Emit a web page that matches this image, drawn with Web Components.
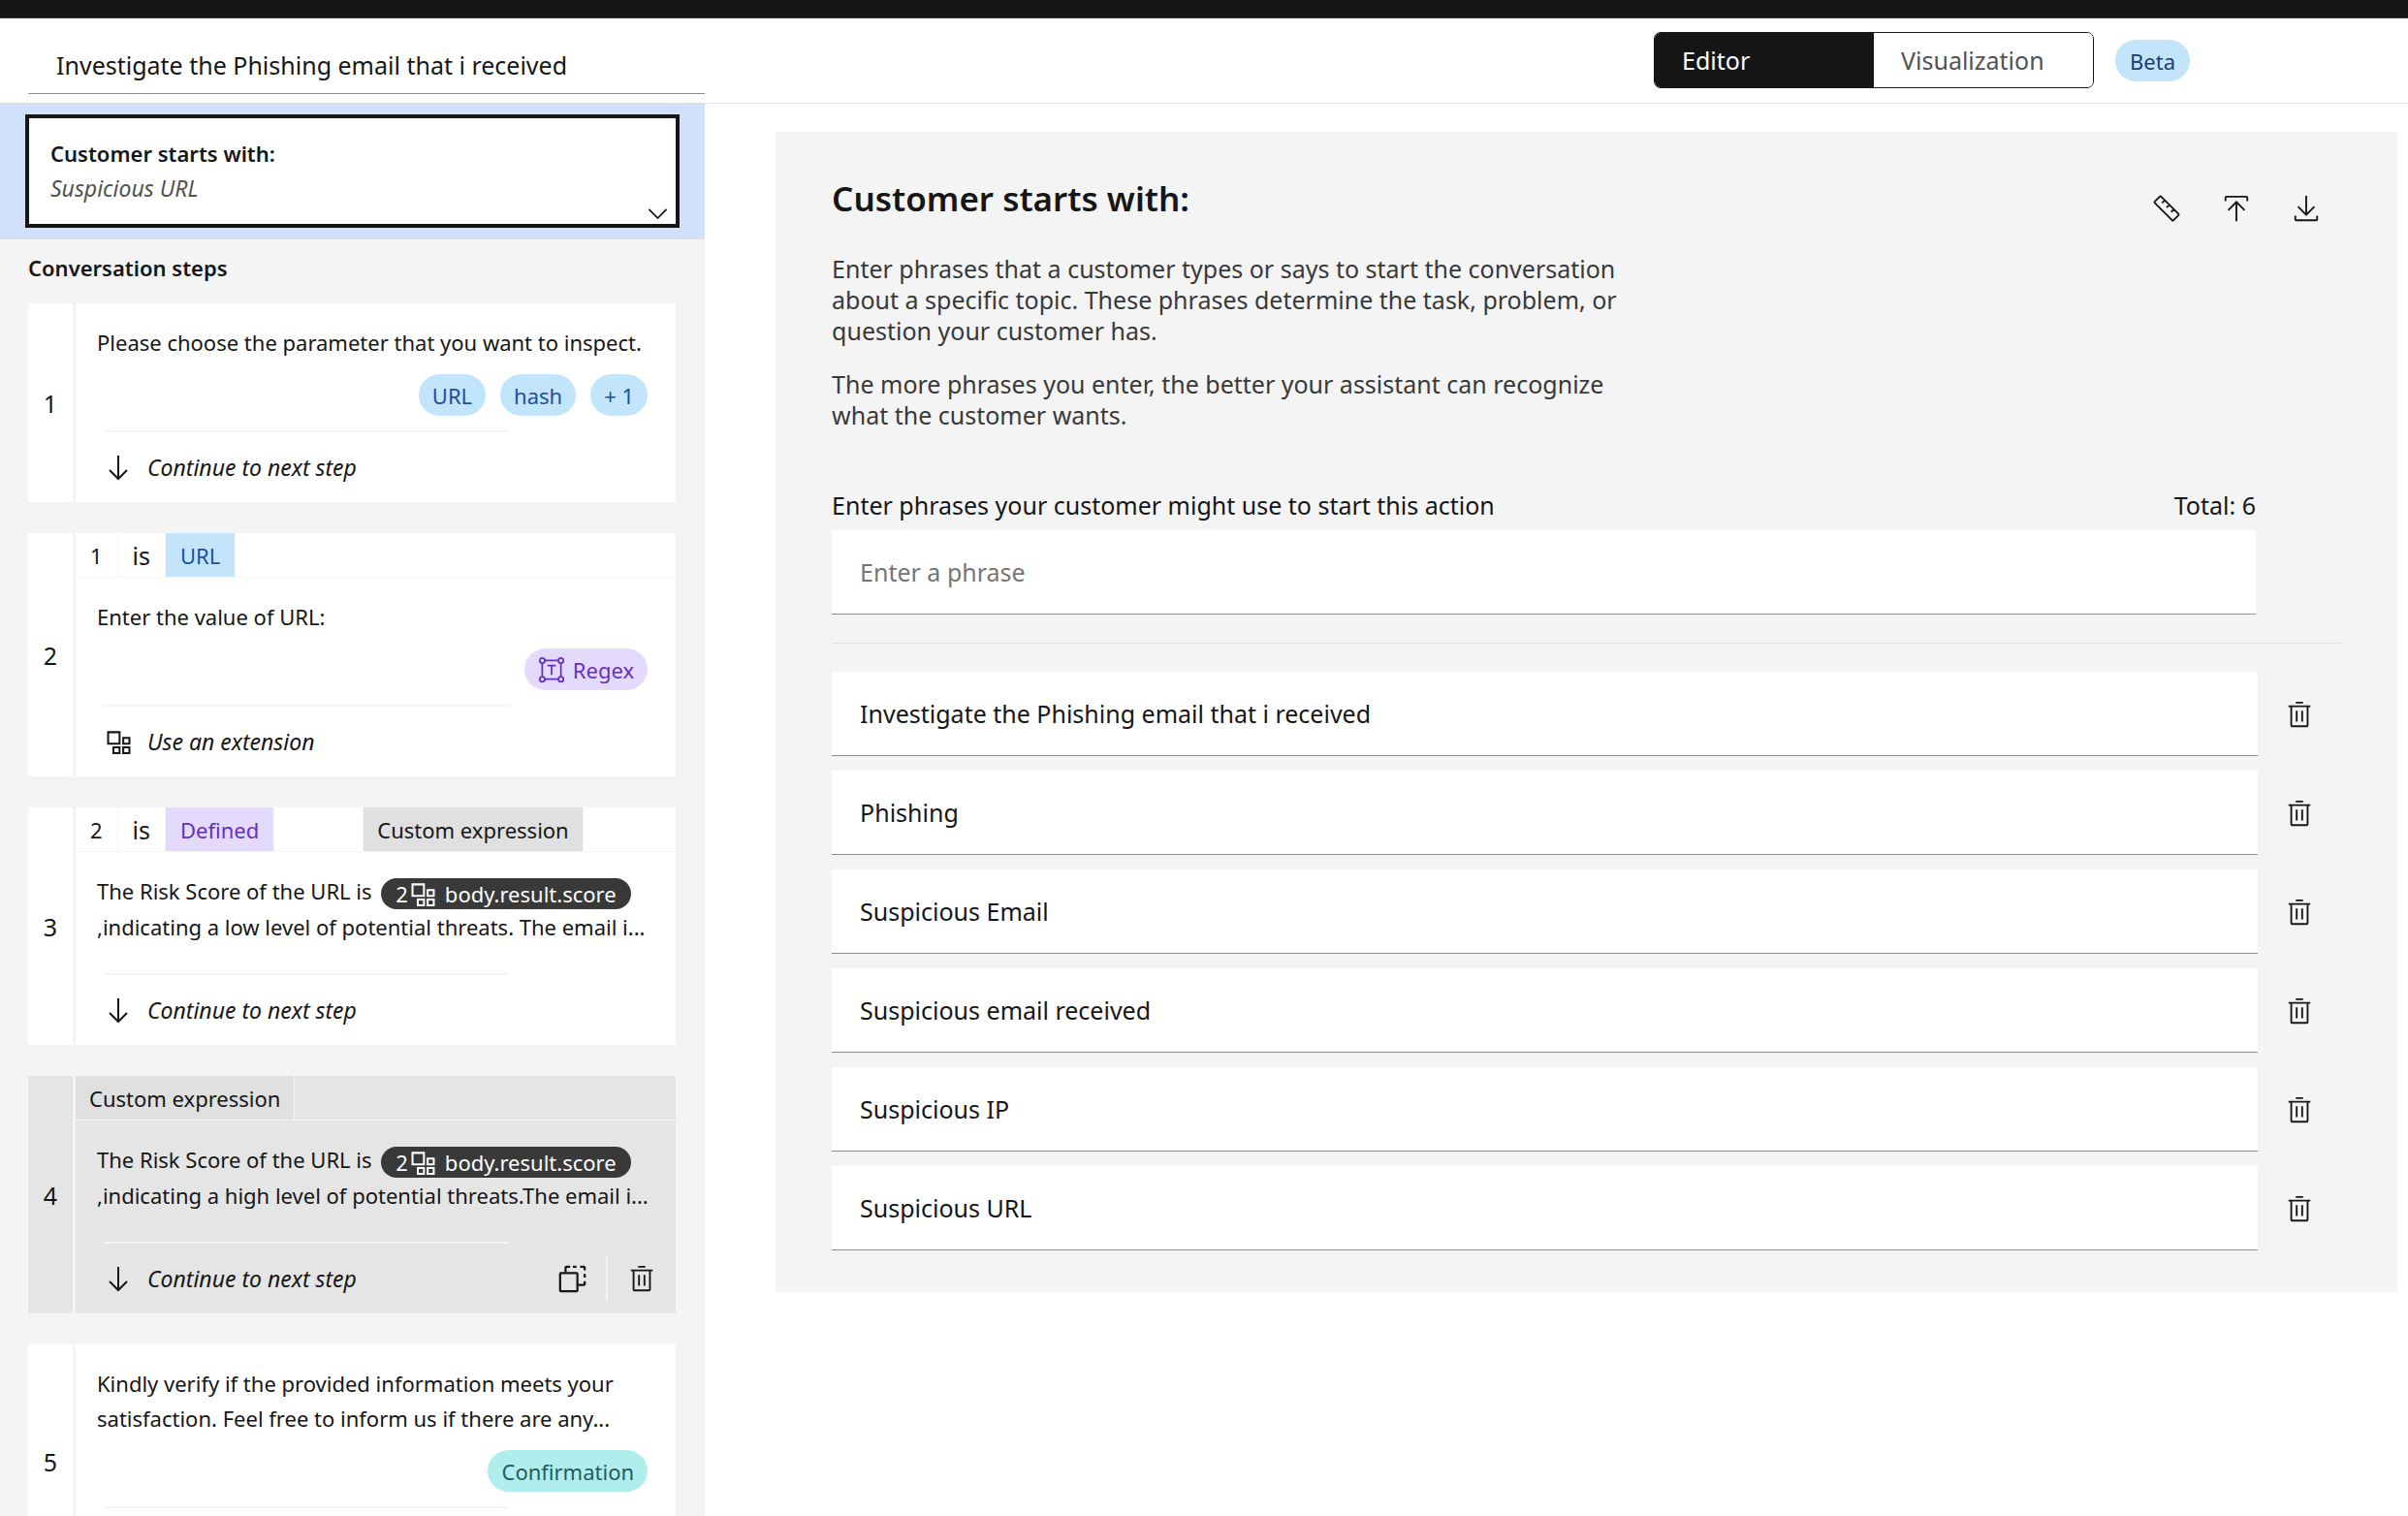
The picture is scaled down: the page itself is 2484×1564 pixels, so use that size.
<!DOCTYPE html>
<html lang="en">
<head>
<meta charset="utf-8">
<title>Investigate the Phishing email that i received</title>
<style>
    body {
        margin: 0;
        height: 100vh;
        overflow: hidden;
        background: #fff;
        color: #161616;
        font-family: "Noto Sans", "Open Sans", sans-serif;
        font-size: 22px;
        line-height: 36px;
    }
</style>
</head>
<body>
<action-editor>
    <editor-header slot="header" name="Investigate the Phishing email that i received"></editor-header>

    <start-card slot="sidebar" heading="Customer starts with:">Suspicious URL</start-card>
    <step-list slot="sidebar" heading="Conversation steps">
        <step-card number="1" next="Continue to next step">
            Please choose the parameter that you want to inspect.
            <tag-pill slot="tags">URL</tag-pill>
            <tag-pill slot="tags">hash</tag-pill>
            <tag-pill slot="tags">+ 1</tag-pill>
        </step-card>
        <step-card number="2" next="Use an extension" next-icon="extension" conditional>
            <step-condition slot="conditions">1</step-condition>
            <step-condition slot="conditions" kind="operator">is</step-condition>
            <step-condition slot="conditions" kind="option">URL</step-condition>
            Enter the value of URL:
            <tag-pill slot="tags" kind="purple"><ui-icon name="regex"></ui-icon>Regex</tag-pill>
        </step-card>
        <step-card number="3" next="Continue to next step" conditional>
            <step-condition slot="conditions">2</step-condition>
            <step-condition slot="conditions" kind="operator">is</step-condition>
            <step-condition slot="conditions" kind="defined">Defined</step-condition>
            <step-condition slot="conditions" kind="blank"></step-condition>
            <step-condition slot="conditions" kind="custom">Custom expression</step-condition>
            The Risk Score of the URL is <variable-chip step="2">body.result.score</variable-chip><br>,indicating a low level of potential threats. The email i...
        </step-card>
        <step-card number="4" next="Continue to next step" conditional hovered>
            <step-condition slot="conditions" kind="custom">Custom expression</step-condition>
            The Risk Score of the URL is <variable-chip step="2">body.result.score</variable-chip><br>,indicating a high level of potential threats.The email i...
        </step-card>
        <step-card number="5">
            Kindly verify if the provided information meets your<br>satisfaction. Feel free to inform us if there are any...
            <tag-pill slot="tags" kind="teal">Confirmation</tag-pill>
        </step-card>
    </step-list>

    <phrase-panel heading="Customer starts with:">
        <p>Enter phrases that a customer types or says to start the conversation<br>about a specific topic. These phrases determine the task, problem, or<br>question your customer has.</p>
        <p>The more phrases you enter, the better your assistant can recognize<br>what the customer wants.</p>
        <phrase-row slot="phrases" value="Investigate the Phishing email that i received"></phrase-row>
        <phrase-row slot="phrases" value="Phishing"></phrase-row>
        <phrase-row slot="phrases" value="Suspicious Email"></phrase-row>
        <phrase-row slot="phrases" value="Suspicious email received"></phrase-row>
        <phrase-row slot="phrases" value="Suspicious IP"></phrase-row>
        <phrase-row slot="phrases" value="Suspicious URL"></phrase-row>
    </phrase-panel>
</action-editor>

<script>
// Icons, all drawn on a 32 unit grid with currentColor
const ICONS = {
    down: '<path d="M16 4V28M7 19l9 9 9-9"/>',
    chevron: '<path d="M6 11l10 10 10-10"/>',
    extension: '<path d="M3 4h14v14H3zM21.500 11h7.500v7h-7.500zM9.500 22.500h7.500v7h-7.500zM21.500 22.500h7.500v7h-7.500z" stroke-width="2.400"/>',
    regex: '<circle cx="5" cy="5" r="3"/><circle cx="27" cy="5" r="3"/><circle cx="5" cy="27" r="3"/><circle cx="27" cy="27" r="3"/><path d="M8 5h16M8 27h16M5 8v16M27 8v16M11 11h10M16 11v11"/>',
    trash: '<path d="M12 3h8M4 7h24M7 7v21a1 1 0 0 0 1 1h16a1 1 0 0 0 1-1V7M13 12v12M19 12v12"/>',
    copy: '<g stroke-width="2.400"><path d="M3 11a1 1 0 0 1 1-1h17a1 1 0 0 1 1 1v18a1 1 0 0 1-1 1H4a1 1 0 0 1-1-1z"/><path d="M9 9V4a1 1 0 0 1 1-1h4M17 3h4M25 3h4a1 1 0 0 1 1 1v3M30 11v4M30 19v3a1 1 0 0 1-1 1h-6"/></g>',
    ruler: '<path d="M10 3L29 22a1.200 1.200 0 0 1 0 1.600L23.600 29a1.200 1.200 0 0 1-1.600 0L3 10a1.200 1.200 0 0 1 0-1.600L8.400 3a1.200 1.200 0 0 1 1.600 0zM14 7l-3 3M19 12l-3 3M24 17l-3 3"/>',
    upload: '<path d="M4 8V4a1 1 0 0 1 1-1h22a1 1 0 0 1 1 1v4M16 30V9M7 18l9-9 9 9"/>',
    download: '<path d="M4 24v4a1 1 0 0 0 1 1h22a1 1 0 0 0 1-1v-4M16 2v21M7 14l9 9 9-9"/>'
};

// Icon
class UiIcon extends HTMLElement {
    constructor() {
        super();
        this.attachShadow({ mode: 'open' });
    }

    connectedCallback() {
        this.shadowRoot.innerHTML = `
            <style>
                :host {
                    display: inline-flex;
                    flex: none;
                    width: var(--icon-size, 30px);
                    height: var(--icon-size, 30px);
                }
                svg {
                    width: 100%;
                    height: 100%;
                    fill: none;
                    stroke: currentColor;
                    stroke-width: 2;
                }
            </style>
            <svg viewBox="0 0 32 32" aria-hidden="true">${ICONS[this.getAttribute('name')]}</svg>
        `;
    }
}

// Page frame: black bar, header, sidebar and main area
class ActionEditor extends HTMLElement {
    constructor() {
        super();
        this.attachShadow({ mode: 'open' });
        this.shadowRoot.innerHTML = `
            <style>
                :host {
                    display: flex;
                    flex-direction: column;
                    height: 100%;
                }
                .top-bar {
                    flex: none;
                    box-sizing: border-box;
                    height: 19px;
                    background: #161616;
                    border-bottom: 1px solid #393939;
                }
                .columns {
                    flex: 1;
                    min-height: 0;
                    display: grid;
                    grid-template-columns: 29.27% 1fr;
                }
                aside {
                    min-width: 0;
                    overflow: hidden;
                    background: #f4f4f4;
                }
                main {
                    min-width: 0;
                    overflow: hidden;
                    padding: 29px 11px 0 73px;
                }
            </style>
            <div class="top-bar"></div>
            <slot name="header"></slot>
            <div class="columns">
                <aside><slot name="sidebar"></slot></aside>
                <main><slot></slot></main>
            </div>
        `;
    }
}

// Header with the action name and the view switch
class EditorHeader extends HTMLElement {
    constructor() {
        super();
        this.attachShadow({ mode: 'open' });
    }

    connectedCallback() {
        this.shadowRoot.innerHTML = `
            <style>
                :host {
                    display: block;
                    flex: none;
                }
                header {
                    box-sizing: border-box;
                    height: 88px;
                    display: flex;
                    justify-content: space-between;
                    border-bottom: 1px solid #e0e0e0;
                }
                .name {
                    box-sizing: border-box;
                    width: 28.1%;
                    height: 58px;
                    margin: 20px 0 0 29px;
                    padding: 0 29px 2px;
                    border: none;
                    border-bottom: 1px solid #8d8d8d;
                    background: none;
                    color: inherit;
                    font: inherit;
                    font-size: 25px;
                    outline: none;
                }
                .views {
                    display: flex;
                    align-items: flex-start;
                    margin: 14px 225px 0 0;
                }
                .switch {
                    box-sizing: border-box;
                    display: grid;
                    grid-template-columns: 1fr 1fr;
                    width: 454px;
                    height: 58px;
                    margin-right: 22px;
                    border: 1px solid #161616;
                    border-radius: 7px;
                    overflow: hidden;
                }
                button {
                    padding: 0 28px;
                    border: none;
                    background: #fff;
                    color: #525252;
                    font: inherit;
                    font-size: 25px;
                    text-align: left;
                }
                button[aria-selected="true"] {
                    background: #161616;
                    color: #fff;
                }
                tag-pill {
                    margin-top: 8px;
                }
            </style>
            <header>
                <input class="name" aria-label="Action name" value="${this.getAttribute('name')}">
                <div class="views">
                    <div class="switch" role="tablist">
                        <button role="tab" aria-selected="true">Editor</button>
                        <button role="tab" aria-selected="false">Visualization</button>
                    </div>
                    <tag-pill kind="beta">Beta</tag-pill>
                </div>
            </header>
        `;
        const tabs = this.shadowRoot.querySelectorAll('button');
        tabs.forEach(tab => {
            tab.addEventListener('click', () => {
                tabs.forEach(t => t.setAttribute('aria-selected', t === tab));
            });
        });
    }
}

// Rounded tag
class TagPill extends HTMLElement {
    constructor() {
        super();
        this.attachShadow({ mode: 'open' });
        this.shadowRoot.innerHTML = `
            <style>
                :host {
                    display: inline-flex;
                    align-items: center;
                    gap: 8px;
                    box-sizing: border-box;
                    height: 43px;
                    padding: 0 14px;
                    border-radius: 22px;
                    background: #c2e5fb;
                    color: #1d4f9c;
                    white-space: nowrap;
                    --icon-size: 28px;
                }
                :host([kind="beta"]) {
                    padding: 0 15px;
                    color: #1c3d70;
                }
                :host([kind="purple"]) {
                    background: #e4dafd;
                    color: #6531c1;
                }
                :host([kind="teal"]) {
                    background: #b0eeee;
                    color: #1f5c5e;
                }
            </style>
            <slot></slot>
        `;
    }
}

// Start condition card at the top of the sidebar
class StartCard extends HTMLElement {
    constructor() {
        super();
        this.attachShadow({ mode: 'open' });
    }

    connectedCallback() {
        this.shadowRoot.innerHTML = `
            <style>
                :host {
                    display: block;
                    padding: 11px 26px;
                    background: #d2e1fb;
                    border-bottom: 1px solid #e0e0e0;
                }
                button {
                    box-sizing: border-box;
                    display: flex;
                    justify-content: space-between;
                    align-items: flex-end;
                    width: 100%;
                    height: 117px;
                    padding: 18px 9px 0 22px;
                    border: 4px solid #161616;
                    background: #fff;
                    color: inherit;
                    font: inherit;
                    text-align: left;
                    --icon-size: 29px;
                }
                .text {
                    align-self: flex-start;
                }
                strong, em {
                    display: block;
                }
                strong {
                    font-weight: 600;
                }
                em {
                    color: #525252;
                    font-size: 23px;
                }
                ui-icon {
                    margin: 0 -5px -4px 0;
                }
            </style>
            <button>
                <span class="text"><strong>${this.getAttribute('heading')}</strong><em><slot></slot></em></span>
                <ui-icon name="chevron"></ui-icon>
            </button>
        `;
    }
}

// List of steps
class StepList extends HTMLElement {
    constructor() {
        super();
        this.attachShadow({ mode: 'open' });
    }

    connectedCallback() {
        this.shadowRoot.innerHTML = `
            <style>
                :host {
                    display: block;
                    padding: 11px 30px 32px 29px;
                }
                h2 {
                    margin: 0 0 19px;
                    font-size: 22px;
                    font-weight: 600;
                }
                .steps {
                    display: flex;
                    flex-direction: column;
                    gap: 32px;
                }
            </style>
            <h2>${this.getAttribute('heading')}</h2>
            <div class="steps"><slot></slot></div>
        `;
    }
}

// One step of the conversation
class StepCard extends HTMLElement {
    constructor() {
        super();
        this.attachShadow({ mode: 'open' });
    }

    connectedCallback() {
        const conditions = this.hasAttribute('conditional')
            ? '<div class="conditions"><slot name="conditions"></slot></div>'
            : '';
        const next = this.hasAttribute('next')
            ? `<span class="lead"><ui-icon class="${this.getAttribute('next-icon') || ''}" name="${this.getAttribute('next-icon') || 'down'}"></ui-icon></span>
                    <span>${this.getAttribute('next')}</span>`
            : '';
        const actions = this.hasAttribute('hovered')
            ? `<div class="actions">
                    <button aria-label="Duplicate step"><ui-icon name="copy"></ui-icon></button>
                    <button aria-label="Delete step"><ui-icon name="trash"></ui-icon></button>
                </div>`
            : '';

        this.shadowRoot.innerHTML = `
            <style>
                :host {
                    display: grid;
                    grid-template-columns: 46px 1fr;
                    gap: 3px;
                    --card: #fff;
                }
                :host([hovered]) {
                    --card: #e5e5e5;
                }
                .number, .body {
                    background: var(--card);
                }
                .number {
                    display: flex;
                    align-items: center;
                    justify-content: center;
                    font-size: 25px;
                }
                .body {
                    min-width: 0;
                }
                .conditions {
                    display: flex;
                    height: 45px;
                    border-bottom: 1px solid #f4f4f4;
                }
                .text {
                    padding: 22px 0 0 22px;
                    white-space: nowrap;
                }
                .tags {
                    display: flex;
                    justify-content: flex-end;
                    gap: 15px;
                    margin: 15px 29px;
                }
                .line {
                    width: 67.5%;
                    height: 2px;
                    margin-left: 29px;
                    background: #f4f4f4;
                }
                .next {
                    display: flex;
                    align-items: center;
                    gap: 14px;
                    height: 72px;
                    padding-left: 28px;
                    font-size: 23px;
                    font-style: italic;
                    --icon-size: 32px;
                }
                .lead {
                    display: flex;
                    justify-content: center;
                    width: 32px;
                }
                .extension {
                    --icon-size: 27px;
                    width: 27px;
                    height: 27px;
                }
                .actions {
                    display: flex;
                    margin-left: auto;
                    --icon-size: 30px;
                }
                button {
                    display: flex;
                    align-items: center;
                    height: 44px;
                    padding: 0 20px;
                    border: none;
                    background: none;
                    color: inherit;
                }
                button + button {
                    border-left: 2px solid #f4f4f4;
                }
            </style>
            <div class="number">${this.getAttribute('number')}</div>
            <div class="body">
                ${conditions}
                <div class="text"><slot></slot></div>
                <div class="tags"><slot name="tags"></slot></div>
                <div class="line"></div>
                <div class="next">
                    ${next}
                    ${actions}
                </div>
            </div>
        `;
    }
}

// Cell in the condition strip of a step
class StepCondition extends HTMLElement {
    constructor() {
        super();
        this.attachShadow({ mode: 'open' });
        this.shadowRoot.innerHTML = `
            <style>
                :host {
                    display: flex;
                    align-items: center;
                    padding: 0 15px;
                    border-right: 1px solid #f4f4f4;
                    white-space: nowrap;
                }
                :host([kind="operator"]) {
                    font-size: 25px;
                }
                :host([kind="option"]) {
                    background: #c2e5fb;
                    color: #1d4f9c;
                }
                :host([kind="defined"]) {
                    background: #e4dafd;
                    color: #6531c1;
                }
                :host([kind="custom"]) {
                    padding: 0 14px;
                    background: #e0e0e0;
                }
                :host([kind="blank"]) {
                    width: 61px;
                }
            </style>
            <slot></slot>
        `;
    }
}

// Dark chip for a variable inside the text of a step
class VariableChip extends HTMLElement {
    constructor() {
        super();
        this.attachShadow({ mode: 'open' });
    }

    connectedCallback() {
        this.shadowRoot.innerHTML = `
            <style>
                :host {
                    display: inline-flex;
                    align-items: center;
                    box-sizing: border-box;
                    height: 32px;
                    margin-left: 4px;
                    padding: 0 15px;
                    border-radius: 16px;
                    background: #393939;
                    color: #fff;
                    vertical-align: middle;
                    --icon-size: 27px;
                }
                ui-icon {
                    margin: 0 9px 0 2px;
                }
            </style>
            ${this.getAttribute('step')}<ui-icon name="extension"></ui-icon><slot></slot>
        `;
    }
}

// Main panel where the phrases are entered
class PhrasePanel extends HTMLElement {
    constructor() {
        super();
        this.attachShadow({ mode: 'open' });
    }

    connectedCallback() {
        const total = this.querySelectorAll('phrase-row').length;
        this.shadowRoot.innerHTML = `
            <style>
                :host {
                    display: block;
                    padding: 41px 58px 43px;
                    background: #f4f4f4;
                    font-size: 25px;
                    line-height: 32px;
                }
                .title {
                    display: flex;
                    justify-content: space-between;
                    align-items: flex-start;
                    margin-bottom: 18px;
                }
                h1 {
                    margin: 0;
                    font-size: 35px;
                    font-weight: 600;
                    line-height: 56px;
                }
                .tools {
                    display: flex;
                    padding-top: 10px;
                }
                button {
                    display: flex;
                    justify-content: center;
                    align-items: center;
                    width: 72px;
                    height: 56px;
                    padding: 0;
                    border: none;
                    background: none;
                    color: inherit;
                }
                ::slotted(p) {
                    margin: 0 0 23px;
                    color: #393939;
                }
                .label {
                    display: flex;
                    justify-content: space-between;
                    margin: 61px 88px 10px 0;
                }
                .entry {
                    display: flex;
                    padding: 0 88px 29px 0;
                    border-bottom: 1px solid #e0e0e0;
                    margin-bottom: 29px;
                }
                input {
                    box-sizing: border-box;
                    flex: 1;
                    min-width: 0;
                    height: 87px;
                    padding: 0 29px;
                    border: none;
                    border-bottom: 1px solid #8d8d8d;
                    background: #fff;
                    color: inherit;
                    font: inherit;
                    outline: none;
                }
                input::placeholder {
                    color: #757575;
                    opacity: 1;
                }
                .phrases {
                    display: flex;
                    flex-direction: column;
                    gap: 15px;
                }
            </style>
            <div class="title">
                <h1>${this.getAttribute('heading')}</h1>
                <div class="tools">
                    <button aria-label="Edit range"><ui-icon name="ruler"></ui-icon></button>
                    <button aria-label="Upload phrases"><ui-icon name="upload"></ui-icon></button>
                    <button aria-label="Download phrases"><ui-icon name="download"></ui-icon></button>
                </div>
            </div>
            <slot></slot>
            <div class="label">
                <label for="phrase">Enter phrases your customer might use to start this action</label>
                <span>Total: ${total}</span>
            </div>
            <div class="entry"><input id="phrase" type="text" placeholder="Enter a phrase"></div>
            <div class="phrases"><slot name="phrases"></slot></div>
        `;
    }
}

// Saved phrase with its delete button
class PhraseRow extends HTMLElement {
    constructor() {
        super();
        this.attachShadow({ mode: 'open' });
    }

    connectedCallback() {
        this.shadowRoot.innerHTML = `
            <style>
                :host {
                    display: flex;
                    align-items: stretch;
                }
                input {
                    box-sizing: border-box;
                    flex: 1;
                    min-width: 0;
                    height: 87px;
                    padding: 0 29px;
                    border: none;
                    border-bottom: 1px solid #8d8d8d;
                    background: #fff;
                    color: inherit;
                    font: inherit;
                    outline: none;
                }
                button {
                    display: flex;
                    justify-content: center;
                    align-items: center;
                    width: 86px;
                    padding: 0;
                    border: none;
                    background: none;
                    color: inherit;
                }
            </style>
            <input aria-label="Phrase" value="${this.getAttribute('value')}">
            <button aria-label="Delete phrase"><ui-icon name="trash"></ui-icon></button>
        `;
        this.shadowRoot.querySelector('button').addEventListener('click', () => this.remove());
    }
}

customElements.define('ui-icon', UiIcon);
customElements.define('tag-pill', TagPill);
customElements.define('action-editor', ActionEditor);
customElements.define('editor-header', EditorHeader);
customElements.define('start-card', StartCard);
customElements.define('step-list', StepList);
customElements.define('step-card', StepCard);
customElements.define('step-condition', StepCondition);
customElements.define('variable-chip', VariableChip);
customElements.define('phrase-panel', PhrasePanel);
customElements.define('phrase-row', PhraseRow);
</script>
</body>
</html>
